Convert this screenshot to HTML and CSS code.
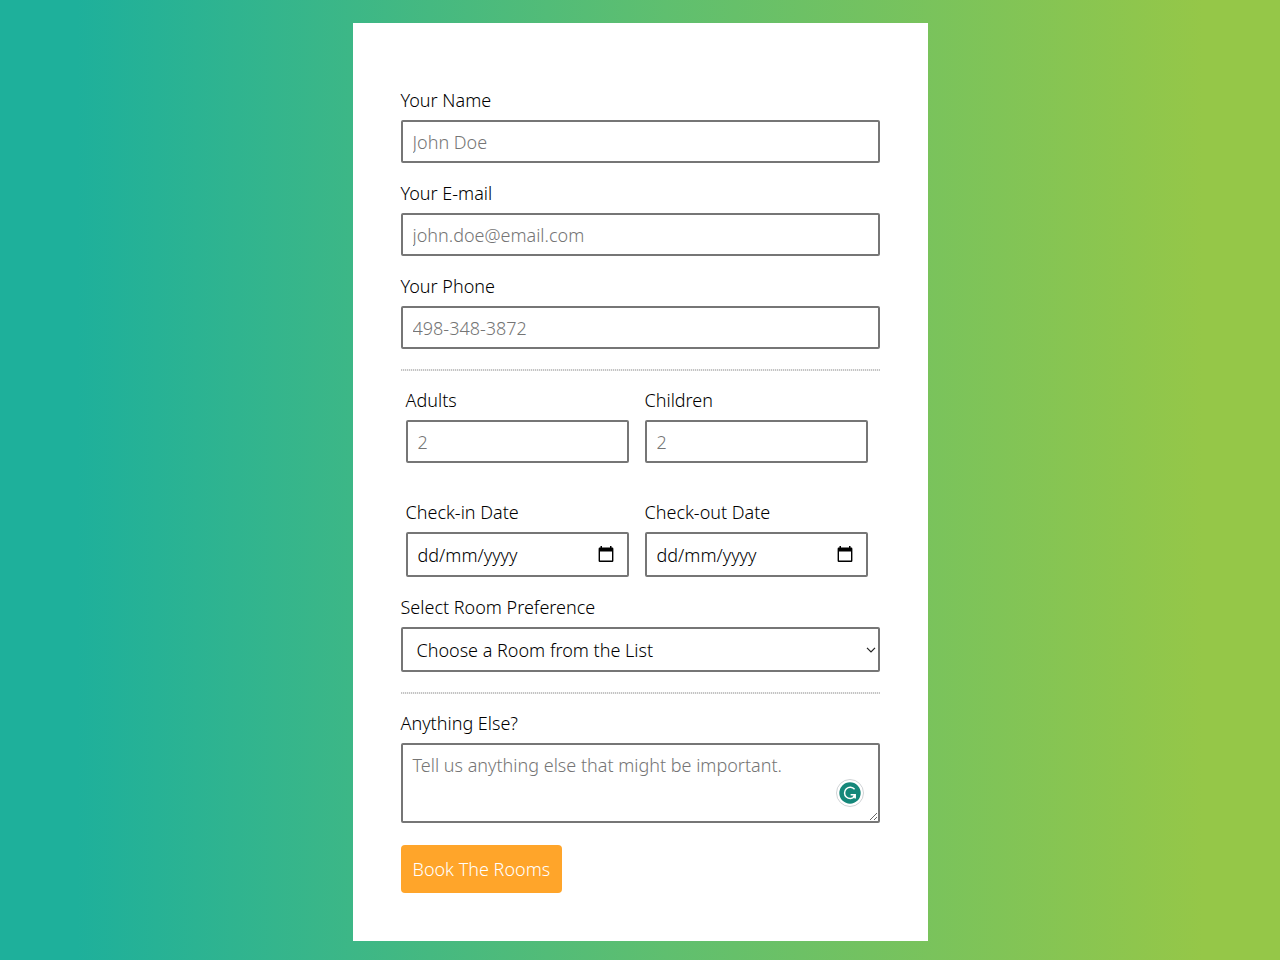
FILE: index.html
```html
<!DOCTYPE html>
<html lang="en-GB">
<head>
<meta charset="utf-8">
<meta name="viewport" content="width=device-width, initial-scale=1">
<title>Hotel Reservation</title>
<link rel="stylesheet" href="styles.css">
</head>
<body>
<form class="booking">
  <div class="field">
    <label for="name">Your Name</label>
    <input class="control" type="text" id="name" placeholder="John Doe">
  </div>
  <div class="field">
    <label for="email">Your E-mail</label>
    <input class="control" type="email" id="email" placeholder="john.doe@email.com">
  </div>
  <div class="field">
    <label for="phone">Your Phone</label>
    <input class="control" type="tel" id="phone" placeholder="498-348-3872">
  </div>
  <hr class="rule">
  <div class="pair pair-guests">
    <div class="field">
      <label for="adults">Adults</label>
      <input class="control" type="number" id="adults" placeholder="2" min="1">
    </div>
    <div class="field">
      <label for="children">Children</label>
      <input class="control" type="number" id="children" placeholder="2" min="0">
    </div>
  </div>
  <div class="pair">
    <div class="field">
      <label for="checkin">Check-in Date</label>
      <div class="overlay-host">
        <input class="control control-tall control-date" type="text" id="checkin" placeholder="dd/mm/yyyy">
        <button class="picker" type="button" aria-label="Open check-in calendar">
          <svg viewBox="0 0 16 18"><path d="M2.500 1h1.500v1.500h8V1h1.500v1.500h.7A1.200 1.200 0 0 1 15.400 3.700V15.800a1.200 1.200 0 0 1-1.200 1.200H1.800A1.200 1.200 0 0 1 .6 15.800V3.700A1.200 1.200 0 0 1 1.800 2.500h.7zM2 6.500v9.100h12V6.500z" fill-rule="evenodd"/></svg>
        </button>
      </div>
    </div>
    <div class="field">
      <label for="checkout">Check-out Date</label>
      <div class="overlay-host">
        <input class="control control-tall control-date" type="text" id="checkout" placeholder="dd/mm/yyyy">
        <button class="picker" type="button" aria-label="Open check-out calendar">
          <svg viewBox="0 0 16 18"><path d="M2.500 1h1.500v1.500h8V1h1.500v1.500h.7A1.200 1.200 0 0 1 15.400 3.700V15.800a1.200 1.200 0 0 1-1.200 1.200H1.800A1.200 1.200 0 0 1 .6 15.800V3.700A1.200 1.200 0 0 1 1.800 2.500h.7zM2 6.500v9.100h12V6.500z" fill-rule="evenodd"/></svg>
        </button>
      </div>
    </div>
  </div>
  <div class="field">
    <label for="room">Select Room Preference</label>
    <div class="overlay-host">
      <select class="control control-tall control-select" id="room">
        <option>Choose a Room from the List</option>
      </select>
      <svg class="chevron" viewBox="0 0 10 6" aria-hidden="true"><path d="M1 .8 5 4.800 9 .8" fill="none" stroke="#222" stroke-width="1.200"/></svg>
    </div>
  </div>
  <hr class="rule">
  <div class="field">
    <label for="message">Anything Else?</label>
    <div class="overlay-host">
      <textarea class="control control-area" id="message" placeholder="Tell us anything else that might be important."></textarea>
      <svg class="badge" viewBox="0 0 28 28" aria-hidden="true">
        <circle cx="14" cy="14" r="13.5" fill="#fff" stroke="#d0d3d6"/>
        <circle cx="14" cy="14" r="10.7" fill="#15877a"/>
        <path d="M18.600 10.200A5.700 5.700 0 1 0 18.600 17.600M14.600 15.700H19.200V19.600M19.200 15.700 17 18.400" fill="none" stroke="#fff" stroke-width="1.500"/>
      </svg>
    </div>
  </div>
  <button class="submit" type="submit">Book The Rooms</button>
</form>
</body>
</html>
```
FILE: styles.css
```css
* {
  box-sizing: border-box;
}

body {
  margin: 0;
  min-height: 100vh;
  padding: 23px 16px 19px;
  background: linear-gradient(90deg, #1eb09b 6%, #5fbf6f 52%, #95c748 94%);
  color: #000;
  font: 300 18px/24px "Noto Sans", sans-serif;
}

.booking {
  max-width: 575px;
  margin: 0 auto;
  padding: 65px 48px 48px;
  background: #fff;
}

.field {
  display: flex;
  flex-direction: column;
  gap: 8px;
  margin-bottom: 18px;
}

.control {
  display: block;
  width: 100%;
  height: 43px;
  margin: 0;
  padding: 0 10px;
  border: 2px solid #767676;
  border-radius: 2px;
  background: #fff;
  color: #000;
  font: inherit;
}

.control::placeholder {
  color: #757575;
}

.control-tall {
  height: 45px;
}

.control-date::placeholder {
  color: #000;
}

.control-select {
  padding: 0 14px;
  appearance: none;
}

.control-area {
  height: 80px;
  padding: 8px 10px;
  resize: vertical;
}

.rule {
  height: 2px;
  margin: 20px 0 17px;
  border: 0;
  background: repeating-linear-gradient(90deg, #c4c4c4 0 1px, #f0f0f0 1px 2px);
}

.pair {
  display: grid;
  grid-template-columns: 1fr 1fr;
  gap: 16px;
  padding: 0 12px 0 5px;
}

.pair-guests {
  margin-bottom: 19px;
}

.overlay-host {
  position: relative;
}

.picker {
  position: absolute;
  top: 13px;
  right: 15px;
  width: 16px;
  height: 18px;
  padding: 0;
  border: 0;
  background: none;
}

.picker svg {
  display: block;
}

.chevron {
  position: absolute;
  top: 20px;
  right: 4px;
  width: 10px;
  height: 6px;
  pointer-events: none;
}

.badge {
  position: absolute;
  right: 16px;
  bottom: 16px;
  width: 28px;
  height: 28px;
}

.submit {
  display: block;
  margin-top: 22px;
  height: 48px;
  padding: 0 12px;
  border: 0;
  border-radius: 4px;
  background: #ffa52a;
  color: #fff;
  font: inherit;
}
```
